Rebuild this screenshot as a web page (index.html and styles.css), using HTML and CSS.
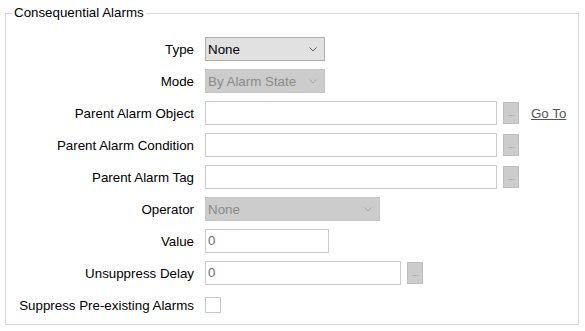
FILE: index.html
```html
<!DOCTYPE html>
<html>
<head>
<meta charset="utf-8">
<link rel="stylesheet" href="styles.css">
</head>
<body>
<fieldset class="group">
  <legend class="group-title">Consequential Alarms</legend>
  <div class="form">
    <label class="lbl">Type</label>
    <div class="ctl">
      <div class="select select-type"><span>None</span>
        <svg class="chev" width="8" height="5" viewBox="0 0 8 5"><path d="M0.5 0.5 L4 4 L7.5 0.5" fill="none" stroke="#606060" stroke-width="1"/></svg>
      </div>
    </div>

    <label class="lbl">Mode</label>
    <div class="ctl">
      <div class="select select-mode disabled"><span>By Alarm State</span>
        <svg class="chev" width="8" height="5" viewBox="0 0 8 5"><path d="M0.5 0.5 L4 4 L7.5 0.5" fill="none" stroke="#a8a8a8" stroke-width="1"/></svg>
      </div>
    </div>

    <label class="lbl">Parent Alarm Object</label>
    <div class="ctl">
      <div class="input input-wide"></div>
      <div class="dots">...</div>
      <a class="goto">Go To</a>
    </div>

    <label class="lbl">Parent Alarm Condition</label>
    <div class="ctl">
      <div class="input input-wide"></div>
      <div class="dots">...</div>
    </div>

    <label class="lbl">Parent Alarm Tag</label>
    <div class="ctl">
      <div class="input input-wide"></div>
      <div class="dots">...</div>
    </div>

    <label class="lbl">Operator</label>
    <div class="ctl">
      <div class="select select-op disabled"><span>None</span>
        <svg class="chev" width="8" height="5" viewBox="0 0 8 5"><path d="M0.5 0.5 L4 4 L7.5 0.5" fill="none" stroke="#a8a8a8" stroke-width="1"/></svg>
      </div>
    </div>

    <label class="lbl">Value</label>
    <div class="ctl">
      <div class="input input-value">0</div>
    </div>

    <label class="lbl">Unsuppress Delay</label>
    <div class="ctl">
      <div class="input input-delay">0</div>
      <div class="dots">...</div>
    </div>

    <label class="lbl">Suppress Pre-existing Alarms</label>
    <div class="ctl">
      <div class="check"></div>
    </div>
  </div>
</fieldset>
</body>
</html>
```
FILE: styles.css
```css
html, body {
  margin: 0;
  padding: 0;
  background: #ffffff;
}
body {
  font-family: "Liberation Sans", Arial, sans-serif;
  font-size: 13.33px;
  color: #000;
  padding: 5px 7px 0 5px;
}
.group {
  margin: 0;
  padding: 0 0 7px 0;
  border: 1px solid #d9d9d9;
  width: 572px;
  box-sizing: content-box;
}
.group-title {
  margin-left: 6px;
  padding: 0 2px;
  line-height: 16px;
  font-size: 13.33px;
  color: #000;
}
.form {
  display: grid;
  grid-template-columns: 188px 1fr;
  column-gap: 11px;
  row-gap: 8px;
  grid-auto-rows: 24px;
  padding-top: 16px;
}
.lbl {
  display: flex;
  align-items: center;
  justify-content: flex-end;
  white-space: nowrap;
}
.ctl {
  display: flex;
  align-items: center;
}
.select {
  box-sizing: border-box;
  height: 24px;
  display: flex;
  align-items: center;
  justify-content: space-between;
  padding: 0 7px 0 2px;
  background: #e1e1e1;
  border: 1px solid #adadad;
  color: #000;
}
.select.disabled {
  background: #cccccc;
  border-color: #c4c4c4;
  color: #8a8a8a;
}
.chev { display: block; margin-top: 1px; }
.select-type, .select-mode { width: 120px; }
.select-op { width: 175px; }
.input {
  box-sizing: border-box;
  height: 24px;
  border: 1px solid #cccccc;
  background: #fff;
  padding: 0 2px 2px;
  display: flex;
  align-items: center;
  color: #6b6b73;
}
.input-wide { width: 292px; }
.input-value { width: 124px; }
.input-delay { width: 196px; }
.dots {
  box-sizing: border-box;
  width: 16px;
  height: 22px;
  margin-left: 6px;
  background: #cccccc;
  border: 1px solid #bdbdbd;
  color: #9a9a9a;
  font-size: 9px;
  line-height: 1;
  display: flex;
  align-items: flex-end;
  justify-content: center;
  padding-bottom: 5px;
  letter-spacing: -0.5px;
}
.goto {
  margin-left: 12px;
  color: #555555;
  text-decoration: underline;
  cursor: pointer;
}
.check {
  box-sizing: border-box;
  width: 16px;
  height: 16px;
  border: 1px solid #c8c8c8;
  background: #fff;
}
```
